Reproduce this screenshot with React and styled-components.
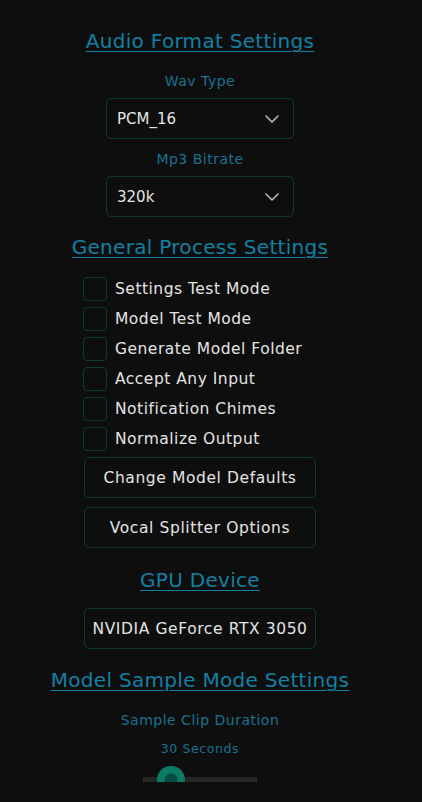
import React, { useState } from "react";
import styled, { createGlobalStyle } from "styled-components";

const GlobalStyle = createGlobalStyle`
  html, body {
    margin: 0;
    padding: 0;
    background: #0e0e0e;
  }
  body {
    font-family: "DejaVu Sans", "Liberation Sans", sans-serif;
  }
`;

const checks = [
  "Settings Test Mode",
  "Model Test Mode",
  "Generate Model Folder",
  "Accept Any Input",
  "Notification Chimes",
  "Normalize Output",
];

const MIN_SECONDS = 1;
const MAX_SECONDS = 120;

const Chevron = () => (
  <svg width="14" height="8" viewBox="0 0 14 8" fill="none">
    <path d="M1 1l6 6 6-6" stroke="#b8b8b8" strokeWidth="1.6" strokeLinecap="round" strokeLinejoin="round" />
  </svg>
);

const Select = ({ value }) => (
  <SelectBox>
    <span>{value}</span>
    <Chevron />
  </SelectBox>
);

const App = () => {
  const [checked, setChecked] = useState({});
  const [seconds] = useState(30);

  const toggle = (label) =>
    setChecked((prev) => ({ ...prev, [label]: !prev[label] }));

  const pos = ((seconds - MIN_SECONDS) / (MAX_SECONDS - MIN_SECONDS)) * 100;

  return (
    <>
      <GlobalStyle />
      <Page>
        <Heading>Audio Format Settings</Heading>
        <Label $mt={18}>Wav Type</Label>
        <Select value="PCM_16" />
        <Label $mt={11}>Mp3 Bitrate</Label>
        <Select value="320k" />

        <Heading $mt={17}>General Process Settings</Heading>
        <CheckList>
          {checks.map((label) => (
            <CheckRow key={label} onClick={() => toggle(label)}>
              <Box $on={checked[label]} />
              <span>{label}</span>
            </CheckRow>
          ))}
        </CheckList>
        <Button $mt={6}>Change Model Defaults</Button>
        <Button $mt={9}>Vocal Splitter Options</Button>

        <Heading $mt={19}>GPU Device</Heading>
        <Button $mt={15}>NVIDIA GeForce RTX 3050</Button>

        <Heading $mt={18}>Model Sample Mode Settings</Heading>
        <Label $mt={18}>Sample Clip Duration</Label>
        <SmallLabel>{seconds} Seconds</SmallLabel>
        <Slider>
          <Thumb style={{ left: `${pos}%` }} />
        </Slider>
      </Page>
    </>
  );
};

export default App;

const Page = styled.div`
  width: 400px;
  padding-top: 28px;
  display: flex;
  flex-direction: column;
  align-items: center;
`;

const Heading = styled.h2`
  margin: ${(p) => p.$mt || 0}px 0 0;
  font-family: "DejaVu Sans", sans-serif;
  font-weight: normal;
  font-size: 20px;
  line-height: 26px;
  letter-spacing: 0.3px;
  color: #1380a3;
  text-decoration: underline;
  text-underline-offset: 3px;
  text-decoration-thickness: 1px;
`;

const Label = styled.div`
  margin-top: ${(p) => p.$mt || 0}px;
  font-size: 14px;
  line-height: 18px;
  letter-spacing: 0.5px;
  color: #1a7290;
`;

const SmallLabel = styled.div`
  margin-top: 12px;
  font-size: 12.5px;
  line-height: 16px;
  letter-spacing: 0.6px;
  color: #1a7290;
`;

const SelectBox = styled.div`
  box-sizing: border-box;
  margin-top: 8px;
  width: 188px;
  height: 41px;
  padding: 0 14px 0 10px;
  display: flex;
  align-items: center;
  justify-content: space-between;
  border: 1.5px solid #0e3a36;
  border-radius: 5px;
  color: #e4e4e4;
  font-size: 15px;
`;

const CheckList = styled.div`
  margin-top: 17px;
  width: 234px;
  display: flex;
  flex-direction: column;
  gap: 6px;
`;

const CheckRow = styled.label`
  display: flex;
  align-items: center;
  gap: 8px;
  height: 24px;
  color: #e4e4e4;
  font-size: 15.5px;
  letter-spacing: 0.5px;
  cursor: pointer;
`;

const Box = styled.span`
  box-sizing: border-box;
  width: 24px;
  height: 24px;
  border: 1.5px solid #0e3a36;
  border-radius: 4px;
  background: ${(p) => (p.$on ? "#0b7a66" : "transparent")};
`;

const Button = styled.button`
  box-sizing: border-box;
  margin-top: ${(p) => p.$mt || 0}px;
  width: 232px;
  height: 41px;
  padding: 0;
  background: transparent;
  border: 1.5px solid #0e3a36;
  border-radius: 5px;
  color: #e4e4e4;
  font-family: "DejaVu Sans", sans-serif;
  font-size: 15.5px;
  letter-spacing: 0.6px;
  cursor: pointer;
`;

const Slider = styled.div`
  position: relative;
  margin-top: 20px;
  width: 114px;
  height: 5px;
  background: #272727;
`;

const Thumb = styled.span`
  position: absolute;
  top: 50%;
  width: 28px;
  height: 28px;
  margin-left: -14px;
  transform: translateY(-50%);
  border-radius: 50%;
  background: radial-gradient(circle, #0a4a44 0 6px, #0b7a66 7px);
`;
